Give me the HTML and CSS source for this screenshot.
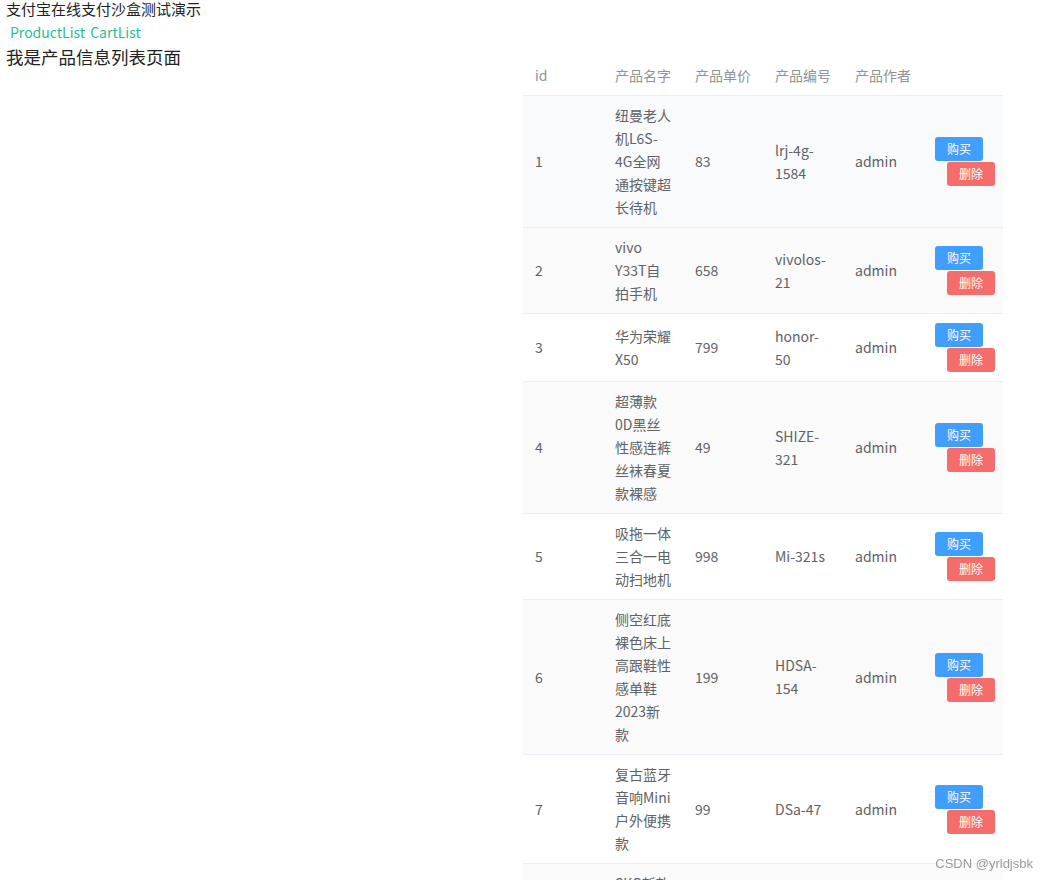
FILE: index.html
```html
<!DOCTYPE html>
<html>

<head>
  <meta charset="utf-8">
  <title>支付宝在线支付沙盒测试演示</title>
  <link rel="stylesheet" href="styles.css">
</head>

<body>
  <div class="app-title">支付宝在线支付沙盒测试演示</div>
  <div class="nav">
    <a href="#" class="nav-link">ProductList</a>
    <a href="#" class="nav-link">CartList</a>
  </div>

  <div class="page">
    <h3 class="page-title">我是产品信息列表页面</h3>

    <table class="product-table">
      <colgroup>
        <col><col><col><col><col><col>
      </colgroup>
      <thead>
        <tr>
          <th>id</th>
          <th>产品名字</th>
          <th>产品单价</th>
          <th>产品编号</th>
          <th>产品作者</th>
          <th></th>
        </tr>
      </thead>
      <tbody>
        <tr class="row-hover">
          <td>1</td>
          <td>纽曼老人机L6S-4G全网通按键超长待机</td>
          <td>83</td>
          <td>lrj-4g-1584</td>
          <td>admin</td>
          <td><div class="actions"><button class="btn btn-buy">购买</button><button class="btn btn-del">删除</button></div></td>
        </tr>
        <tr class="row-stripe">
          <td>2</td>
          <td>vivo Y33T自拍手机</td>
          <td>658</td>
          <td>vivolos-21</td>
          <td>admin</td>
          <td><div class="actions"><button class="btn btn-buy">购买</button><button class="btn btn-del">删除</button></div></td>
        </tr>
        <tr>
          <td>3</td>
          <td>华为荣耀X50</td>
          <td>799</td>
          <td>honor-50</td>
          <td>admin</td>
          <td><div class="actions"><button class="btn btn-buy">购买</button><button class="btn btn-del">删除</button></div></td>
        </tr>
        <tr class="row-stripe">
          <td>4</td>
          <td>超薄款0D黑丝性感连裤丝袜春夏款裸感</td>
          <td>49</td>
          <td>SHIZE-321</td>
          <td>admin</td>
          <td><div class="actions"><button class="btn btn-buy">购买</button><button class="btn btn-del">删除</button></div></td>
        </tr>
        <tr>
          <td>5</td>
          <td>吸拖一体三合一电动扫地机</td>
          <td>998</td>
          <td>Mi-321s</td>
          <td>admin</td>
          <td><div class="actions"><button class="btn btn-buy">购买</button><button class="btn btn-del">删除</button></div></td>
        </tr>
        <tr class="row-stripe">
          <td>6</td>
          <td>侧空红底裸色床上高跟鞋性感单鞋2023新款</td>
          <td>199</td>
          <td>HDSA-154</td>
          <td>admin</td>
          <td><div class="actions"><button class="btn btn-buy">购买</button><button class="btn btn-del">删除</button></div></td>
        </tr>
        <tr>
          <td>7</td>
          <td>复古蓝牙音响Mini户外便携款</td>
          <td>99</td>
          <td>DSa-47</td>
          <td>admin</td>
          <td><div class="actions"><button class="btn btn-buy">购买</button><button class="btn btn-del">删除</button></div></td>
        </tr>
        <tr class="row-stripe">
          <td>8</td>
          <td>SKG新款颈椎按摩仪肩颈按摩器</td>
          <td>359</td>
          <td>SKG-K5</td>
          <td>admin</td>
          <td><div class="actions"><button class="btn btn-buy">购买</button><button class="btn btn-del">删除</button></div></td>
        </tr>
      </tbody>
    </table>
  </div>

  <div class="watermark">CSDN @yrldjsbk</div>
</body>

</html>
```

FILE: styles.css
```css
body {
  margin: 0;
  padding: 0;
  font-family: "Noto Sans CJK SC", "Liberation Sans", sans-serif;
  color: #2c3e50;
  background: #fff;
}

.app-title {
  font-size: 15px;
  line-height: 18px;
  padding-left: 6px;
  color: #222;
}

.nav {
  margin-top: 4px;
  padding-left: 10px;
  font-size: 14px;
  line-height: 20px;
}

.nav-link {
  color: #1fbf96;
  text-decoration: none;
  margin-right: 2px;
}

.page {
  display: flex;
  align-items: flex-start;
}

.page-title {
  margin: 3px 0 0 6px;
  font-size: 17.5px;
  font-weight: normal;
  line-height: 24px;
  color: #222;
}

/* product table */
.product-table {
  margin-top: 14px;
  margin-left: auto;
  margin-right: 44px;
  width: 480px;
  table-layout: fixed;
  border-collapse: collapse;
  font-size: 14px;
  color: #606266;
}

.product-table col {
  width: 80px;
}

.product-table th,
.product-table td {
  padding: 8px 12px;
  line-height: 23px;
  text-align: left;
  vertical-align: middle;
  border-bottom: 1px solid #ebeef5;
  word-wrap: break-word;
}

.product-table th {
  color: #909399;
  font-weight: normal;
}

.row-stripe td {
  background-color: #fafafa;
}

.row-hover td {
  background-color: #f9fafc;
}

.actions {
  padding: 1px 0;
}

.btn {
  display: block;
  width: 48px;
  height: 24px;
  padding: 0;
  border: none;
  border-radius: 3px;
  font-family: inherit;
  font-size: 12px;
  line-height: 24px;
  color: #fff;
  text-align: center;
  cursor: pointer;
}

.btn + .btn {
  margin: 1px 0 0 12px;
}

.btn-buy {
  background-color: #409eff;
}

.btn-del {
  background-color: #f56c6c;
}

.watermark {
  position: fixed;
  right: 14px;
  bottom: 9px;
  font-family: "Liberation Sans", sans-serif;
  font-size: 13px;
  color: #9a9a9a;
}
```
